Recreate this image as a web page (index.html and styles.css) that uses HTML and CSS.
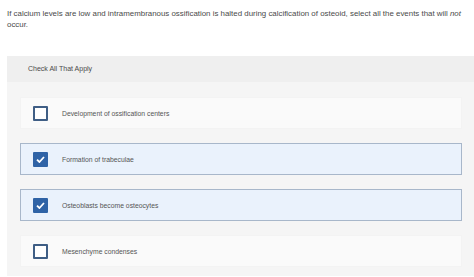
FILE: index.html
```html
<!DOCTYPE html>
<html>
<head>
    <title>Check All That Apply</title>
    <link rel="stylesheet" href="styles.css">
</head>
<body>
    <p class="question">If calcium levels are low and intramembranous ossification is halted during calcification of osteoid, select all the events that will <em>not</em> occur.</p>

    <div class="panel">
        <div class="panel-header">Check All That Apply</div>
        <div class="panel-body">
            <div class="option">
                <span class="box"></span>
                <span class="label">Development of ossification centers</span>
            </div>
            <div class="option checked">
                <span class="box">
                    <svg width="9" height="7" viewBox="0 0 9 7"><path d="M1 3.6 L3.4 6 L8 1" fill="none" stroke="#fff" stroke-width="1.8"/></svg>
                </span>
                <span class="label">Formation of trabeculae</span>
            </div>
            <div class="option checked">
                <span class="box">
                    <svg width="9" height="7" viewBox="0 0 9 7"><path d="M1 3.6 L3.4 6 L8 1" fill="none" stroke="#fff" stroke-width="1.8"/></svg>
                </span>
                <span class="label">Osteoblasts become osteocytes</span>
            </div>
            <div class="option">
                <span class="box"></span>
                <span class="label">Mesenchyme condenses</span>
            </div>
        </div>
    </div>
</body>
</html>
```

FILE: styles.css
```css
body {
    margin: 0;
    background: #fff;
    font-family: 'Liberation Sans', Arial, sans-serif;
    color: #333;
}

.question {
    margin: 0;
    padding: 8px 4px 0 7px;
    font-size: 7.9px;
    line-height: 11px;
    height: 56px;
    box-sizing: border-box;
    color: #4a4a4a;
}

.question em {
    font-style: italic;
}

.panel {
    margin-left: 7px;
    background: #f5f5f5;
}

.panel-header {
    height: 26px;
    line-height: 26px;
    padding-left: 21px;
    background: #efefef;
    font-size: 7px;
    color: #4a4a4a;
}

.panel-body {
    padding: 15px 12px 9px 13px;
    display: flex;
    flex-direction: column;
    gap: 14px;
}

.option {
    height: 32px;
    box-sizing: border-box;
    display: flex;
    align-items: center;
    padding-left: 12px;
    background: #fafafa;
    border: 1px solid #f3f3f3;
}

.option.checked {
    background: #eaf2fc;
    border-color: #a8b7ca;
}

.box {
    width: 15px;
    height: 15px;
    box-sizing: border-box;
    border: 2px solid #3f5e85;
    border-radius: 1px;
    background: #fff;
    display: flex;
    align-items: center;
    justify-content: center;
}

.checked .box {
    background: #2f63a6;
    border-color: #2f63a6;
}

.label {
    margin-left: 14px;
    font-size: 6.8px;
    color: #555;
}
```
